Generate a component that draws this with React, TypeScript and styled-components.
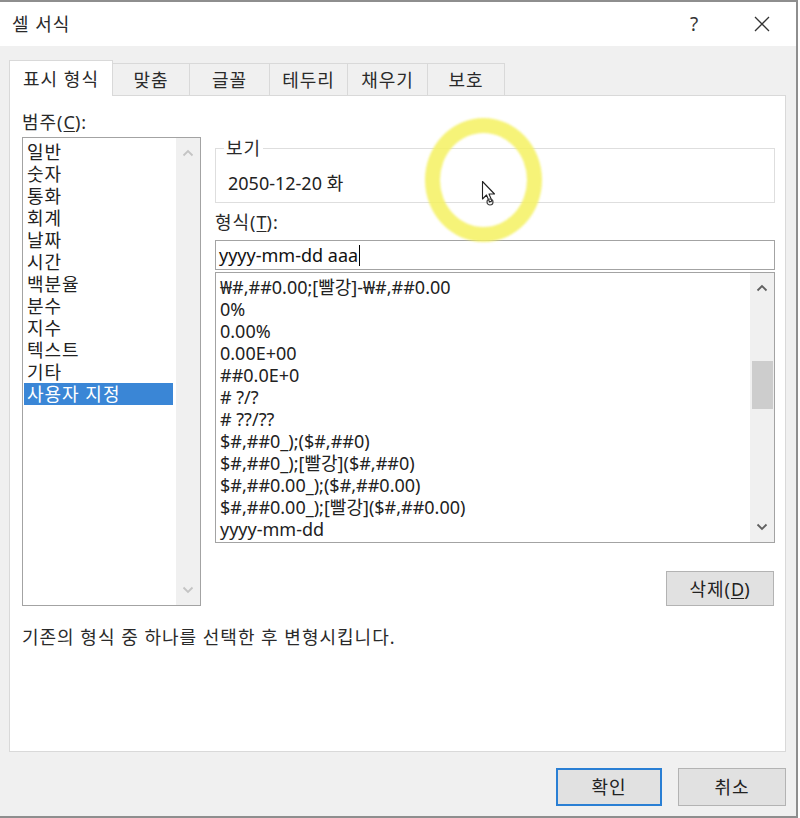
import React from 'react';
import styled, { createGlobalStyle } from 'styled-components';

const GlobalStyle = createGlobalStyle`
  html, body {
    margin: 0;
    padding: 0;
    background: #ffffff;
  }
  body {
    font-family: "Noto Sans", "Noto Sans CJK KR", sans-serif;
    font-size: 18px;
    letter-spacing: 1px;
    color: #1f1f1f;
  }
`;

const Window = styled.div`
  position: relative;
  width: 798px;
  height: 818px;
  box-sizing: border-box;
  border-top: 2px solid #8e8e8e;
  border-right: 2px solid #8e8e8e;
  border-bottom: 2px solid #8e8e8e;
  background: #f0f0f0;
  display: flex;
  flex-direction: column;
  overflow: hidden;
`;

const TitleBar = styled.div`
  height: 44px;
  flex: none;
  display: flex;
  align-items: center;
  background: #ffffff;
  padding-left: 12px;
`;

const Title = styled.div`
  flex: 1;
  line-height: 22px;
  color: #2a2a2a;
`;

const TitleButton = styled.div`
  width: 68px;
  height: 44px;
  display: flex;
  align-items: center;
  justify-content: center;
  font-size: 19px;
  letter-spacing: 0;
  color: #333;
`;

const Body = styled.div`
  flex: 1;
  display: flex;
  flex-direction: column;
  padding: 14px 10px 0 9px;
`;

const TabStrip = styled.div`
  display: flex;
  align-items: flex-end;
  height: 35px;
  padding-left: 1px;
`;

const Tab = styled.div<{ $active?: boolean; $w: number }>`
  box-sizing: border-box;
  width: ${(p) => p.$w}px;
  height: ${(p) => (p.$active ? 36 : 32)}px;
  margin-bottom: ${(p) => (p.$active ? -1 : 0)}px;
  margin-left: -1px;
  border: 1px solid #d9d9d9;
  border-bottom: none;
  background: ${(p) => (p.$active ? '#ffffff' : '#f0f0f0')};
  position: relative;
  z-index: ${(p) => (p.$active ? 1 : 0)};
  display: flex;
  align-items: center;
  justify-content: center;
  line-height: 22px;
  color: #2a2a2a;
`;

const Panel = styled.div`
  box-sizing: border-box;
  height: 657px;
  background: #ffffff;
  border: 1px solid #d9d9d9;
  padding: 15px 10px 0 12px;
`;

const Columns = styled.div`
  display: grid;
  grid-template-columns: 179px 1fr;
  column-gap: 14px;
`;

const Column = styled.div<{ $offset?: number }>`
  display: flex;
  flex-direction: column;
  padding-top: ${(p) => p.$offset ?? 0}px;
  min-width: 0;
`;

const Label = styled.div`
  line-height: 22px;
  height: 22px;
  color: #2a2a2a;

  u {
    letter-spacing: 0;
    text-decoration-thickness: 1px;
    text-underline-offset: 2px;
  }
`;

const ListBox = styled.div<{ $height: number; $gap: number }>`
  box-sizing: border-box;
  height: ${(p) => p.$height}px;
  margin-top: ${(p) => p.$gap}px;
  border: 1px solid #a3a3a3;
  background: #ffffff;
  display: flex;
  overflow: hidden;
`;

const Items = styled.div<{ $latin?: boolean }>`
  flex: 1;
  min-width: 0;
  padding-top: 3px;
  overflow: hidden;
  letter-spacing: ${(p) => (p.$latin ? 0 : 1)}px;
`;

const Item = styled.div<{ $selected?: boolean }>`
  height: 22px;
  line-height: 22px;
  margin: 0 3px 0 1px;
  padding-left: 3px;
  white-space: nowrap;
  background: ${(p) => (p.$selected ? '#3a86d6' : 'transparent')};
  color: ${(p) => (p.$selected ? '#ffffff' : '#222222')};
`;

const Scrollbar = styled.div`
  width: 24px;
  flex: none;
  background: #f0f0f0;
  display: flex;
  flex-direction: column;
`;

const ArrowCell = styled.div`
  height: 30px;
  display: flex;
  align-items: center;
  justify-content: center;
`;

const Track = styled.div`
  flex: 1;
  display: flex;
  flex-direction: column;
  align-items: center;
`;

const Thumb = styled.div<{ $top: number; $size: number }>`
  width: 21px;
  margin-top: ${(p) => p.$top}px;
  height: ${(p) => p.$size}px;
  background: #cdcdcd;
`;

const GroupBox = styled.fieldset`
  margin: 0;
  padding: 13px 12px 8px 12px;
  border: 1px solid #dedede;
  min-width: 0;
`;

const Legend = styled.legend`
  padding: 0 2px;
  margin-left: -4px;
  line-height: 22px;
  color: #2a2a2a;
`;

const Preview = styled.div`
  line-height: 22px;
  letter-spacing: 0;
  color: #222;
`;

const FormatLabel = styled(Label)`
  margin-top: 8px;
`;

const FieldBox = styled.div`
  box-sizing: border-box;
  height: 30px;
  margin-top: 7px;
  border: 1px solid #a3a3a3;
  padding-left: 3px;
  display: flex;
  align-items: center;
  line-height: 22px;
  letter-spacing: 0;
  color: #111;
  white-space: nowrap;
`;

const Caret = styled.span`
  display: inline-block;
  width: 1px;
  height: 21px;
  margin-left: 1px;
  background: #000;
`;

const ButtonRow = styled.div`
  display: flex;
  justify-content: flex-end;
  margin-top: 28px;
  padding-right: 1px;
`;

const Button = styled.div<{ $w: number; $h: number; $default?: boolean }>`
  box-sizing: border-box;
  width: ${(p) => p.$w}px;
  height: ${(p) => p.$h}px;
  display: flex;
  align-items: center;
  justify-content: center;
  background: #e1e1e1;
  border: 1px solid ${(p) => (p.$default ? '#2a7fd4' : '#b3b3b3')};
  box-shadow: ${(p) => (p.$default ? 'inset 0 0 0 1px #2a7fd4' : 'none')};
  line-height: 22px;
  color: #222;

  u {
    letter-spacing: 0;
    text-decoration-thickness: 1px;
    text-underline-offset: 2px;
  }
`;

const Hint = styled.div`
  margin-top: 20px;
  line-height: 22px;
  color: #2a2a2a;
`;

const Footer = styled.div`
  display: flex;
  justify-content: flex-end;
  gap: 16px;
  padding-top: 16px;
`;

const Highlight = styled.div`
  position: absolute;
  left: 425px;
  top: 116px;
  width: 117px;
  height: 124px;
  box-sizing: border-box;
  border: 15px solid rgba(245, 241, 96, 0.85);
  border-radius: 50%;
  filter: blur(1px);
  pointer-events: none;
`;

const Pointer = styled.svg`
  position: absolute;
  left: 481px;
  top: 178px;
  pointer-events: none;
`;

const Chevron = ({ up, color }: { up?: boolean; color: string }) => (
  <svg width="12" height="8" viewBox="0 0 12 8">
    <polyline
      points={up ? '1.5,6.5 6,2 10.5,6.5' : '1.5,1.5 6,6 10.5,1.5'}
      fill="none"
      stroke={color}
      strokeWidth="1.8"
    />
  </svg>
);

const categories = [
  '일반',
  '숫자',
  '통화',
  '회계',
  '날짜',
  '시간',
  '백분율',
  '분수',
  '지수',
  '텍스트',
  '기타',
  '사용자 지정',
];

const formats = [
  '₩#,##0.00;[빨강]-₩#,##0.00',
  '0%',
  '0.00%',
  '0.00E+00',
  '##0.0E+0',
  '# ?/?',
  '# ??/??',
  '$#,##0_);($#,##0)',
  '$#,##0_);[빨강]($#,##0)',
  '$#,##0.00_);($#,##0.00)',
  '$#,##0.00_);[빨강]($#,##0.00)',
  'yyyy-mm-dd',
];

const tabs = [
  { label: '표시 형식', w: 104 },
  { label: '맞춤', w: 78 },
  { label: '글꼴', w: 81 },
  { label: '테두리', w: 79 },
  { label: '채우기', w: 81 },
  { label: '보호', w: 78 },
];

export default function App() {
  return (
    <>
      <GlobalStyle />
      <Window>
        <TitleBar>
          <Title>셀 서식</Title>
          <TitleButton>?</TitleButton>
          <TitleButton>
            <svg width="16" height="16" viewBox="0 0 16 16">
              <path d="M1 1 L15 15 M15 1 L1 15" stroke="#333" strokeWidth="1.3" />
            </svg>
          </TitleButton>
        </TitleBar>

        <Body>
          <TabStrip>
            {tabs.map((t, i) => (
              <Tab key={t.label} $w={t.w} $active={i === 0}>
                {t.label}
              </Tab>
            ))}
          </TabStrip>

          <Panel>
            <Columns>
              <Column>
                <Label>
                  범주(<u>C</u>):
                </Label>
                <ListBox $height={469} $gap={4}>
                  <Items>
                    {categories.map((c) => (
                      <Item key={c} $selected={c === '사용자 지정'}>
                        {c}
                      </Item>
                    ))}
                  </Items>
                  <Scrollbar>
                    <ArrowCell>
                      <Chevron up color="#c4c4c4" />
                    </ArrowCell>
                    <Track />
                    <ArrowCell>
                      <Chevron color="#c4c4c4" />
                    </ArrowCell>
                  </Scrollbar>
                </ListBox>
              </Column>

              <Column $offset={26}>
                <GroupBox>
                  <Legend>보기</Legend>
                  <Preview>2050-12-20 화</Preview>
                </GroupBox>

                <FormatLabel>
                  형식(<u>T</u>):
                </FormatLabel>
                <FieldBox>
                  yyyy-mm-dd aaa
                  <Caret />
                </FieldBox>

                <ListBox $height={271} $gap={2}>
                  <Items $latin>
                    {formats.map((f) => (
                      <Item key={f}>{f}</Item>
                    ))}
                  </Items>
                  <Scrollbar>
                    <ArrowCell>
                      <Chevron up color="#606060" />
                    </ArrowCell>
                    <Track>
                      <Thumb $top={58} $size={48} />
                    </Track>
                    <ArrowCell>
                      <Chevron color="#606060" />
                    </ArrowCell>
                  </Scrollbar>
                </ListBox>

                <ButtonRow>
                  <Button $w={108} $h={35}>
                    삭제(<u>D</u>)
                  </Button>
                </ButtonRow>
              </Column>
            </Columns>

            <Hint>기존의 형식 중 하나를 선택한 후 변형시킵니다.</Hint>
          </Panel>

          <Footer>
            <Button $w={106} $h={38} $default>
              확인
            </Button>
            <Button $w={108} $h={38}>
              취소
            </Button>
          </Footer>
        </Body>

        <Highlight />
        <Pointer width="20" height="28" viewBox="0 0 20 28">
          <path
            d="M1.5 1.5 L1.5 19 L5.5 15 L8.5 22 L11 21 L8 14 L13.5 14 Z"
            fill="#ffffff"
            stroke="#222"
            strokeWidth="1.1"
            strokeLinejoin="round"
          />
          <circle cx="9" cy="22" r="3" fill="none" stroke="#444" strokeWidth="1.2" />
        </Pointer>
      </Window>
    </>
  );
}
